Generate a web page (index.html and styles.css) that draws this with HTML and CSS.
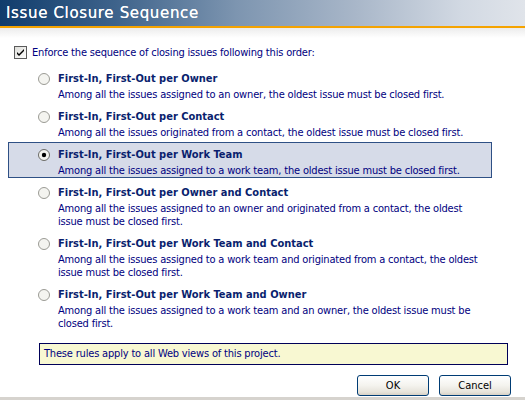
FILE: index.html
```html
<!DOCTYPE html>
<html>
<head>
<meta charset="utf-8">
<link rel="stylesheet" href="styles.css">
</head>
<body>
<div class="dialog">
  <div class="titlebar">Issue Closure Sequence</div>
  <div class="titleshade"></div>
  <label class="enforce">
    <svg class="check" width="13" height="13" viewBox="0 0 13 13">
      <defs><linearGradient id="cb" x1="0" y1="0" x2="1" y2="1"><stop offset="0" stop-color="#dcdcd7"/><stop offset="1" stop-color="#ffffff"/></linearGradient></defs>
      <rect x="0.5" y="0.5" width="12" height="12" fill="url(#cb)" stroke="#5b5b5b"/>
      <path d="M3 6 L5 8 L10 3 L10 5 L5 10 L3 8 Z" fill="#000"/>
    </svg>
    <span>Enforce the sequence of closing issues following this order:</span>
  </label>
  <div class="options">
    <div class="option">
      <svg class="radio" width="12" height="12" viewBox="0 0 12 12"><circle cx="6" cy="6" r="5.5" fill="#f4f4f0" stroke="#9a9a94"/></svg>
      <div class="otext">
        <div class="otitle">First-In, First-Out per Owner</div>
        <div class="odesc">Among all the issues assigned to an owner, the oldest issue must be closed first.</div>
      </div>
    </div>
    <div class="option">
      <svg class="radio" width="12" height="12" viewBox="0 0 12 12"><circle cx="6" cy="6" r="5.5" fill="#f4f4f0" stroke="#9a9a94"/></svg>
      <div class="otext">
        <div class="otitle">First-In, First-Out per Contact</div>
        <div class="odesc">Among all the issues originated from a contact, the oldest issue must be closed first.</div>
      </div>
    </div>
    <div class="option selected">
      <svg class="radio" width="12" height="12" viewBox="0 0 12 12"><circle cx="6" cy="6" r="5.5" fill="#f4f4f0" stroke="#6a6a66"/><circle cx="6" cy="6" r="2.2" fill="#000"/></svg>
      <div class="otext">
        <div class="otitle">First-In, First-Out per Work Team</div>
        <div class="odesc">Among all the issues assigned to a work team, the oldest issue must be closed first.</div>
      </div>
    </div>
    <div class="option">
      <svg class="radio" width="12" height="12" viewBox="0 0 12 12"><circle cx="6" cy="6" r="5.5" fill="#f4f4f0" stroke="#9a9a94"/></svg>
      <div class="otext">
        <div class="otitle">First-In, First-Out per Owner and Contact</div>
        <div class="odesc">Among all the issues assigned to an owner and originated from a contact, the oldest issue must be closed first.</div>
      </div>
    </div>
    <div class="option">
      <svg class="radio" width="12" height="12" viewBox="0 0 12 12"><circle cx="6" cy="6" r="5.5" fill="#f4f4f0" stroke="#9a9a94"/></svg>
      <div class="otext">
        <div class="otitle">First-In, First-Out per Work Team and Contact</div>
        <div class="odesc">Among all the issues assigned to a work team and originated from a contact, the oldest issue must be closed first.</div>
      </div>
    </div>
    <div class="option">
      <svg class="radio" width="12" height="12" viewBox="0 0 12 12"><circle cx="6" cy="6" r="5.5" fill="#f4f4f0" stroke="#9a9a94"/></svg>
      <div class="otext">
        <div class="otitle">First-In, First-Out per Work Team and Owner</div>
        <div class="odesc">Among all the issues assigned to a work team and an owner, the oldest issue must be closed first.</div>
      </div>
    </div>
  </div>
  <div class="note">These rules apply to all Web views of this project.</div>
  <div class="buttons">
    <button class="btn">OK</button>
    <button class="btn">Cancel</button>
  </div>
</div>
</body>
</html>
```
FILE: styles.css
```css
html, body {
  margin: 0;
  padding: 0;
  background: #ffffff;
}
body {
  font-family: "DejaVu Sans Condensed", "DejaVu Sans", sans-serif;
  font-stretch: condensed;
  font-size: 11px;
  letter-spacing: -0.18px;
  color: #000080;
}
.dialog {
  width: 525px;
  height: 400px;
  box-sizing: border-box;
  border-bottom: 3px solid #d6d3ce;
  display: flex;
  flex-direction: column;
}
.titlebar {
  height: 26px;
  line-height: 26px;
  padding-left: 6px;
  color: #ffffff;
  font-family: "DejaVu Sans", sans-serif;
  font-stretch: normal;
  font-size: 15px;
  letter-spacing: 0.65px;
  text-shadow: 0 0 0.4px #ffffff;
  background: linear-gradient(to right, #103c6c 0%, #3e638b 22%, #7d95b0 45%, #a9b7c9 68%, #d2d9e3 88%, #e0e4ea 100%);
  border-bottom: 2px solid #f5a300;
}
.titleshade {
  height: 10px;
  background: linear-gradient(#ececec, #ffffff);
}
.enforce {
  display: flex;
  align-items: center;
  gap: 5px;
  margin: 8px 0 0 14px;
  height: 13px;
  line-height: 13px;
}
.check { flex: none; }
.options {
  margin: 7px 33px 0 8px;
  display: flex;
  flex-direction: column;
  gap: 2px;
}
.option {
  display: flex;
  align-items: flex-start;
  gap: 8px;
  padding: 3px 4px 0 29px;
  border: 1px solid transparent;
}
.option.selected {
  background: #d6dbe8;
  border-color: #2e5085;
}
.radio {
  flex: none;
  margin-top: 3px;
}
.otitle {
  font-weight: bold;
  line-height: 18px;
  letter-spacing: 0;
  color: #0a1f6e;
}
.odesc {
  line-height: 13px;
}
.note {
  margin: 12px 17px 0 39px;
  border: 1px solid #000058;
  background: #f8f8d2;
  line-height: 20px;
  padding-left: 4px;
}
.buttons {
  display: flex;
  justify-content: flex-end;
  gap: 10px;
  margin: 10px 14px 0 0;
}
.btn {
  width: 72px;
  height: 21px;
  font-family: "DejaVu Sans Condensed", "DejaVu Sans", sans-serif;
  font-stretch: condensed;
  font-size: 11px;
  color: #000000;
  border: 1px solid #003c74;
  border-radius: 3px;
  background: linear-gradient(#ffffff 0%, #f4f3ee 50%, #e6e3da 85%, #d6d0c5 100%);
  padding: 0;
}
```
